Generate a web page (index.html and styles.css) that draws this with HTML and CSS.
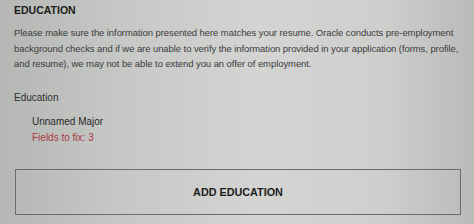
FILE: index.html
```html
<!DOCTYPE html>
<html lang="en">
<head>
    <meta charset="UTF-8">
    <title>Education</title>
    <link rel="stylesheet" href="styles.css">
</head>
<body>
    <div class="section">
        <h2>EDUCATION</h2>
        <p class="intro">Please make sure the information presented here matches your resume. Oracle conducts pre-employment background checks and if we are unable to verify the information provided in your application (forms, profile, and resume), we may not be able to extend you an offer of employment.</p>

        <div class="group-label">Education</div>
        <div class="entry">
            <div class="entry-title">Unnamed Major</div>
            <div class="entry-error">Fields to fix: 3</div>
        </div>

        <button class="add-btn">ADD EDUCATION</button>
    </div>
</body>
</html>
```

FILE: styles.css
```css
html, body {
    margin: 0;
    height: 100%;
}
body {
    font-family: 'Liberation Sans', Arial, sans-serif;
    color: #2a2a2a;
    background: linear-gradient(90deg, #b4b7b3 0%, #c6c8c5 25%, #d4d5d3 55%, #cfd0ce 80%, #b9bbb8 100%);
}
.section {
    padding: 3px 4px 0 14px;
}
h2 {
    font-size: 10.5px;
    font-weight: bold;
    margin: 0;
    line-height: 14px;
    color: #1c1c1c;
}
.intro {
    font-size: 9.5px;
    letter-spacing: -0.08px;
    line-height: 15.5px;
    color: #3c3c3c;
    margin: 8px 0 0 0;
}
.group-label {
    font-size: 10px;
    margin-top: 20px;
    color: #2e2e2e;
}
.entry {
    padding-left: 18px;
    margin-top: 11px;
    font-size: 10px;
    line-height: 16px;
}
.entry-title {
    color: #2a2a2a;
}
.entry-error {
    color: #ac3644;
}
.add-btn {
    display: block;
    width: 446px;
    height: 46px;
    margin: 23px 0 0 1px;
    background: transparent;
    border: 1px solid #6a6c6a;
    font-family: 'Liberation Sans', Arial, sans-serif;
    font-size: 10.8px;
    font-weight: bold;
    color: #1c1c1c;
}
```
